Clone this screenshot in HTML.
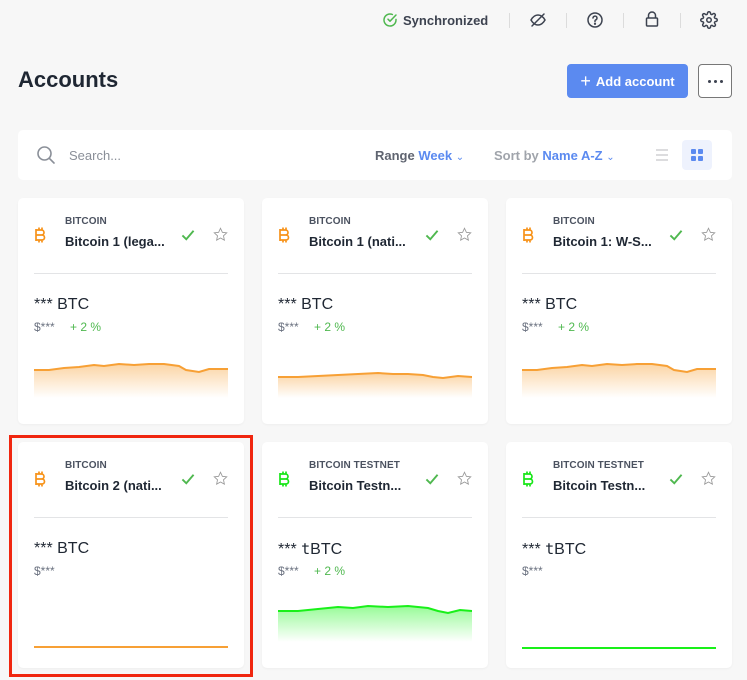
<!DOCTYPE html>
<html><head><meta charset="utf-8"><style>
*{margin:0;padding:0;box-sizing:border-box}
body{width:747px;height:680px;background:#f7f7f7;font-family:"Liberation Sans",sans-serif;position:relative;overflow:hidden;color:#1f2733}
.a{position:absolute}
.card{position:absolute;width:226px;height:226px;background:#fff;border-radius:5px;box-shadow:0 1px 2px rgba(0,0,0,.04)}
.lbl{position:absolute;left:47px;top:18px;font-size:10px;font-weight:bold;color:#4b5260;letter-spacing:.1px}
.nm{position:absolute;left:47px;top:36px;font-size:13px;font-weight:bold;color:#1f2733}
.div{position:absolute;left:16px;right:16px;top:75px;height:1px;background:#e3e4e6}
.amt{position:absolute;left:16px;top:98px;font-size:16px;color:#1f2733}
.fiat{position:absolute;left:16px;top:122px;font-size:12px;color:#6b7280}
.pct{color:#4fb84f;margin-left:12px}
.ico{position:absolute;left:16px;top:28px}
.chk{position:absolute;left:163px;top:31px}
.star{position:absolute;left:195px;top:29px}
.ch{position:absolute;left:16px;top:160px}
</style></head><body>

<div class="a" style="left:382px;top:12px;display:flex;align-items:center">
<svg width="16" height="16" viewBox="0 0 16 16"><path d="M14 7.4V8a6 6 0 1 1-3.6-5.5" fill="none" stroke="#4fb84f" stroke-width="1.5" stroke-linecap="round"/><path d="M14 3L8 9.2 6 7.2" fill="none" stroke="#4fb84f" stroke-width="1.5" stroke-linecap="round" stroke-linejoin="round"/></svg>
<span style="margin-left:5px;font-size:13px;font-weight:bold;color:#3d4350">Synchronized</span></div>
<div class="a" style="left:509px;top:13px;width:1px;height:15px;background:#dcdcdc"></div>
<div class="a" style="left:566px;top:13px;width:1px;height:15px;background:#dcdcdc"></div>
<div class="a" style="left:623px;top:13px;width:1px;height:15px;background:#dcdcdc"></div>
<div class="a" style="left:680px;top:13px;width:1px;height:15px;background:#dcdcdc"></div>
<svg class="a" style="left:529px;top:11px" width="18" height="18" viewBox="0 0 18 18" fill="none" stroke="#3d4350" stroke-width="1.5" stroke-linecap="round"><path d="M2 9c2-3.5 4.5-5 7-5s5 1.5 7 5c-2 3.5-4.5 5-7 5S4 12.5 2 9z"/><path d="M15 3L3 15"/></svg>
<svg class="a" style="left:586px;top:11px" width="18" height="18" viewBox="0 0 18 18" fill="none" stroke="#3d4350" stroke-width="1.5" stroke-linecap="round"><circle cx="9" cy="9" r="7"/><path d="M7 7a2 2 0 1 1 2.5 2c-.4.2-.5.5-.5 1v.5"/><circle cx="9" cy="12.8" r=".4" fill="#3d4350"/></svg>
<svg class="a" style="left:643px;top:10px" width="18" height="18" viewBox="0 0 18 18" fill="none" stroke="#3d4350" stroke-width="1.5"><rect x="3.5" y="8" width="11" height="8" rx="1"/><path d="M5.5 8V5.5a3.5 3.5 0 0 1 7 0V8"/></svg>
<svg class="a" style="left:700px;top:11px" width="18" height="18" viewBox="0 0 24 24" fill="none" stroke="#3d4350" stroke-width="2"><circle cx="12" cy="12" r="3"/><path d="M19.4 15a1.7 1.7 0 0 0 .3 1.8l.1.1a2 2 0 1 1-2.8 2.8l-.1-.1a1.7 1.7 0 0 0-1.8-.3 1.7 1.7 0 0 0-1 1.5V21a2 2 0 1 1-4 0v-.1a1.7 1.7 0 0 0-1.1-1.5 1.7 1.7 0 0 0-1.8.3l-.1.1a2 2 0 1 1-2.8-2.8l.1-.1a1.7 1.7 0 0 0 .3-1.8 1.7 1.7 0 0 0-1.5-1H3a2 2 0 1 1 0-4h.1a1.7 1.7 0 0 0 1.5-1.1 1.7 1.7 0 0 0-.3-1.8l-.1-.1a2 2 0 1 1 2.8-2.8l.1.1a1.7 1.7 0 0 0 1.800.3H9a1.7 1.7 0 0 0 1-1.5V3a2 2 0 1 1 4 0v.1a1.7 1.7 0 0 0 1 1.5 1.7 1.7 0 0 0 1.8-.3l.1-.1a2 2 0 1 1 2.8 2.8l-.1.1a1.7 1.7 0 0 0-.3 1.8V9a1.7 1.7 0 0 0 1.5 1H21a2 2 0 1 1 0 4h-.1a1.7 1.7 0 0 0-1.5 1z"/></svg>

<div class="a" style="left:18px;top:67px;font-size:22px;font-weight:bold;color:#1f2733">Accounts</div>
<div class="a" style="left:567px;top:64px;width:121px;height:34px;background:#5b8af0;border-radius:4px;color:#fff;font-size:13px;font-weight:bold;display:flex;align-items:center;justify-content:center"><span style="font-size:18px;font-weight:normal;margin-right:5px;line-height:1">+</span>Add account</div>
<div class="a" style="left:698px;top:64px;width:34px;height:34px;border:1px solid #777;border-radius:4px;background:#fff;display:flex;align-items:center;justify-content:center;gap:3px"><i style="width:3px;height:3px;border-radius:50%;background:#3d4350"></i><i style="width:3px;height:3px;border-radius:50%;background:#3d4350"></i><i style="width:3px;height:3px;border-radius:50%;background:#3d4350"></i></div>

<div class="a" style="left:18px;top:130px;width:714px;height:50px;background:#fff;border-radius:5px"></div>
<svg class="a" style="left:36px;top:145px" width="20" height="20" viewBox="0 0 20 20" fill="none" stroke="#8a8f98" stroke-width="1.6" stroke-linecap="round"><circle cx="8.5" cy="8.5" r="6.5"/><path d="M13.3 13.3L18 18"/></svg>
<div class="a" style="left:69px;top:148px;font-size:13px;color:#8a8f98">Search...</div>
<div class="a" style="left:375px;top:148px;font-size:13px;font-weight:bold;color:#5f6470">Range <span style="color:#5b8af0">Week</span> <span style="color:#5b8af0;font-weight:normal;font-size:10px">&#8964;</span></div>
<div class="a" style="left:494px;top:148px;font-size:13px;font-weight:bold;color:#a0a4ab">Sort by <span style="color:#5b8af0">Name A-Z</span> <span style="color:#5b8af0;font-weight:normal;font-size:10px">&#8964;</span></div>
<svg class="a" style="left:655px;top:148px" width="14" height="14" viewBox="0 0 14 14" stroke="#d0d1d4" stroke-width="1.5"><path d="M1 2h12M1 7h12M1 12h12"/></svg>
<div class="a" style="left:682px;top:140px;width:30px;height:30px;background:#eef2fd;border-radius:4px"></div>
<svg class="a" style="left:691px;top:149px" width="12" height="12" viewBox="0 0 12 12" fill="#5b8af0"><rect x="0" y="0" width="5" height="5" rx="1"/><rect x="7" y="0" width="5" height="5" rx="1"/><rect x="0" y="7" width="5" height="5" rx="1"/><rect x="7" y="7" width="5" height="5" rx="1"/></svg>

<div class="a" style="left:9px;top:435px;width:244px;height:242px;border:3px solid #f0260f"></div>

<svg width="0" height="0" style="position:absolute"><defs>
<linearGradient id="go" x1="0" y1="0" x2="0" y2="1"><stop offset="0" stop-color="#f7a035" stop-opacity=".45"/><stop offset="1" stop-color="#f7a035" stop-opacity="0"/></linearGradient>
<linearGradient id="gg" x1="0" y1="0" x2="0" y2="1"><stop offset="0" stop-color="#19f519" stop-opacity=".45"/><stop offset="1" stop-color="#19f519" stop-opacity="0"/></linearGradient>
</defs></svg>

<div class="card" style="left:18px;top:198px">
<svg class="ico" width="12" height="18" viewBox="0 0 12 18" fill="none" stroke="#f7931a" stroke-width="1.7"><path d="M2 4h5.5a2.5 2.5 0 0 1 0 5H2zM2 9h6a2.5 2.5 0 0 1 0 5H2zM2 3v12M5 1.5v2.5M5 14v2.5M8 1.5v2.5M8 14v2.5"/></svg>
<div class="lbl">BITCOIN</div><div class="nm">Bitcoin 1 (lega...</div>
<svg class="chk" width="14" height="12" viewBox="0 0 16 14" fill="none" stroke="#4fb84f" stroke-width="2.2"><path d="M1.5 7.5l4.5 4.5L14.5 2"/></svg>
<svg class="star" width="15" height="15" viewBox="0 0 24 24" fill="none" stroke="#999" stroke-width="1.4"><path d="M12 2l3 6.5 7 .8-5.2 4.8 1.4 7L12 17.6 5.8 21.1l1.4-7L2 9.3l7-.8z"/></svg>
<div class="div"></div><div class="amt">*** BTC</div><div class="fiat">$*** <span class="pct">+ 2 %</span></div>
<svg class="ch" width="194" height="40" viewBox="0 0 194 40"><path d="M0 12L15 12 30 10 45 9 60 7 70 8 85 6 100 7 115 6 130 6 145 8 152 12 165 14 175 11 185 11 194 11V40H0z" fill="url(#go)"/><path d="M0 12L15 12 30 10 45 9 60 7 70 8 85 6 100 7 115 6 130 6 145 8 152 12 165 14 175 11 185 11 194 11" fill="none" stroke="#f7a035" stroke-width="2"/></svg>
</div>

<div class="card" style="left:262px;top:198px">
<svg class="ico" width="12" height="18" viewBox="0 0 12 18" fill="none" stroke="#f7931a" stroke-width="1.7"><path d="M2 4h5.5a2.5 2.5 0 0 1 0 5H2zM2 9h6a2.5 2.5 0 0 1 0 5H2zM2 3v12M5 1.5v2.5M5 14v2.5M8 1.5v2.5M8 14v2.5"/></svg>
<div class="lbl">BITCOIN</div><div class="nm">Bitcoin 1 (nati...</div>
<svg class="chk" width="14" height="12" viewBox="0 0 16 14" fill="none" stroke="#4fb84f" stroke-width="2.2"><path d="M1.5 7.5l4.5 4.5L14.5 2"/></svg>
<svg class="star" width="15" height="15" viewBox="0 0 24 24" fill="none" stroke="#999" stroke-width="1.4"><path d="M12 2l3 6.5 7 .8-5.2 4.8 1.4 7L12 17.6 5.8 21.1l1.4-7L2 9.3l7-.8z"/></svg>
<div class="div"></div><div class="amt">*** BTC</div><div class="fiat">$*** <span class="pct">+ 2 %</span></div>
<svg class="ch" width="194" height="40" viewBox="0 0 194 40"><path d="M0 19L20 19 40 18 60 17 80 16 100 15 115 16 130 16 145 17 155 19 165 20 180 18 194 19V40H0z" fill="url(#go)"/><path d="M0 19L20 19 40 18 60 17 80 16 100 15 115 16 130 16 145 17 155 19 165 20 180 18 194 19" fill="none" stroke="#f7a035" stroke-width="2"/></svg>
</div>

<div class="card" style="left:506px;top:198px">
<svg class="ico" width="12" height="18" viewBox="0 0 12 18" fill="none" stroke="#f7931a" stroke-width="1.7"><path d="M2 4h5.5a2.5 2.5 0 0 1 0 5H2zM2 9h6a2.5 2.5 0 0 1 0 5H2zM2 3v12M5 1.5v2.5M5 14v2.5M8 1.5v2.5M8 14v2.5"/></svg>
<div class="lbl">BITCOIN</div><div class="nm">Bitcoin 1: W-S...</div>
<svg class="chk" width="14" height="12" viewBox="0 0 16 14" fill="none" stroke="#4fb84f" stroke-width="2.2"><path d="M1.5 7.5l4.5 4.5L14.5 2"/></svg>
<svg class="star" width="15" height="15" viewBox="0 0 24 24" fill="none" stroke="#999" stroke-width="1.4"><path d="M12 2l3 6.5 7 .8-5.2 4.8 1.4 7L12 17.6 5.8 21.1l1.4-7L2 9.3l7-.8z"/></svg>
<div class="div"></div><div class="amt">*** BTC</div><div class="fiat">$*** <span class="pct">+ 2 %</span></div>
<svg class="ch" width="194" height="40" viewBox="0 0 194 40"><path d="M0 12L15 12 30 10 45 9 60 7 70 8 85 6 100 7 115 6 130 6 145 8 152 12 165 14 175 11 185 11 194 11V40H0z" fill="url(#go)"/><path d="M0 12L15 12 30 10 45 9 60 7 70 8 85 6 100 7 115 6 130 6 145 8 152 12 165 14 175 11 185 11 194 11" fill="none" stroke="#f7a035" stroke-width="2"/></svg>
</div>

<div class="card" style="left:18px;top:442px">
<svg class="ico" width="12" height="18" viewBox="0 0 12 18" fill="none" stroke="#f7931a" stroke-width="1.7"><path d="M2 4h5.5a2.5 2.5 0 0 1 0 5H2zM2 9h6a2.5 2.5 0 0 1 0 5H2zM2 3v12M5 1.5v2.5M5 14v2.5M8 1.5v2.5M8 14v2.5"/></svg>
<div class="lbl">BITCOIN</div><div class="nm">Bitcoin 2 (nati...</div>
<svg class="chk" width="14" height="12" viewBox="0 0 16 14" fill="none" stroke="#4fb84f" stroke-width="2.2"><path d="M1.5 7.5l4.5 4.5L14.5 2"/></svg>
<svg class="star" width="15" height="15" viewBox="0 0 24 24" fill="none" stroke="#999" stroke-width="1.4"><path d="M12 2l3 6.5 7 .8-5.2 4.8 1.4 7L12 17.6 5.8 21.1l1.4-7L2 9.3l7-.8z"/></svg>
<div class="div"></div><div class="amt">*** BTC</div><div class="fiat">$***</div>
<div class="a" style="left:16px;top:204px;width:194px;height:2px;background:#f7a035"></div>
</div>

<div class="card" style="left:262px;top:442px">
<svg class="ico" width="12" height="18" viewBox="0 0 12 18" fill="none" stroke="#19e619" stroke-width="1.7"><path d="M2 4h5.5a2.5 2.5 0 0 1 0 5H2zM2 9h6a2.5 2.5 0 0 1 0 5H2zM2 3v12M5 1.5v2.5M5 14v2.5M8 1.5v2.5M8 14v2.5"/></svg>
<div class="lbl">BITCOIN TESTNET</div><div class="nm">Bitcoin Testn...</div>
<svg class="chk" width="14" height="12" viewBox="0 0 16 14" fill="none" stroke="#4fb84f" stroke-width="2.2"><path d="M1.5 7.5l4.5 4.5L14.5 2"/></svg>
<svg class="star" width="15" height="15" viewBox="0 0 24 24" fill="none" stroke="#999" stroke-width="1.4"><path d="M12 2l3 6.5 7 .8-5.2 4.8 1.4 7L12 17.6 5.8 21.1l1.4-7L2 9.3l7-.8z"/></svg>
<div class="div"></div><div class="amt">*** <span style="font-family:'DejaVu Sans Mono',monospace;font-size:15px">t</span>BTC</div><div class="fiat">$*** <span class="pct">+ 2 %</span></div>
<svg class="ch" width="194" height="40" viewBox="0 0 194 40"><path d="M0 9L20 9 40 7 60 5 75 6 90 4 110 5 130 4 150 6 160 9 170 11 182 8 194 9V40H0z" fill="url(#gg)"/><path d="M0 9L20 9 40 7 60 5 75 6 90 4 110 5 130 4 150 6 160 9 170 11 182 8 194 9" fill="none" stroke="#19f019" stroke-width="2"/></svg>
</div>

<div class="card" style="left:506px;top:442px">
<svg class="ico" width="12" height="18" viewBox="0 0 12 18" fill="none" stroke="#19e619" stroke-width="1.7"><path d="M2 4h5.5a2.5 2.5 0 0 1 0 5H2zM2 9h6a2.5 2.5 0 0 1 0 5H2zM2 3v12M5 1.5v2.5M5 14v2.5M8 1.5v2.5M8 14v2.5"/></svg>
<div class="lbl">BITCOIN TESTNET</div><div class="nm">Bitcoin Testn...</div>
<svg class="chk" width="14" height="12" viewBox="0 0 16 14" fill="none" stroke="#4fb84f" stroke-width="2.2"><path d="M1.5 7.5l4.5 4.5L14.5 2"/></svg>
<svg class="star" width="15" height="15" viewBox="0 0 24 24" fill="none" stroke="#999" stroke-width="1.4"><path d="M12 2l3 6.5 7 .8-5.2 4.8 1.4 7L12 17.6 5.8 21.1l1.4-7L2 9.3l7-.8z"/></svg>
<div class="div"></div><div class="amt">*** <span style="font-family:'DejaVu Sans Mono',monospace;font-size:15px">t</span>BTC</div><div class="fiat">$***</div>
<div class="a" style="left:16px;top:205px;width:194px;height:2px;background:#19f019"></div>
</div>

</body></html>
